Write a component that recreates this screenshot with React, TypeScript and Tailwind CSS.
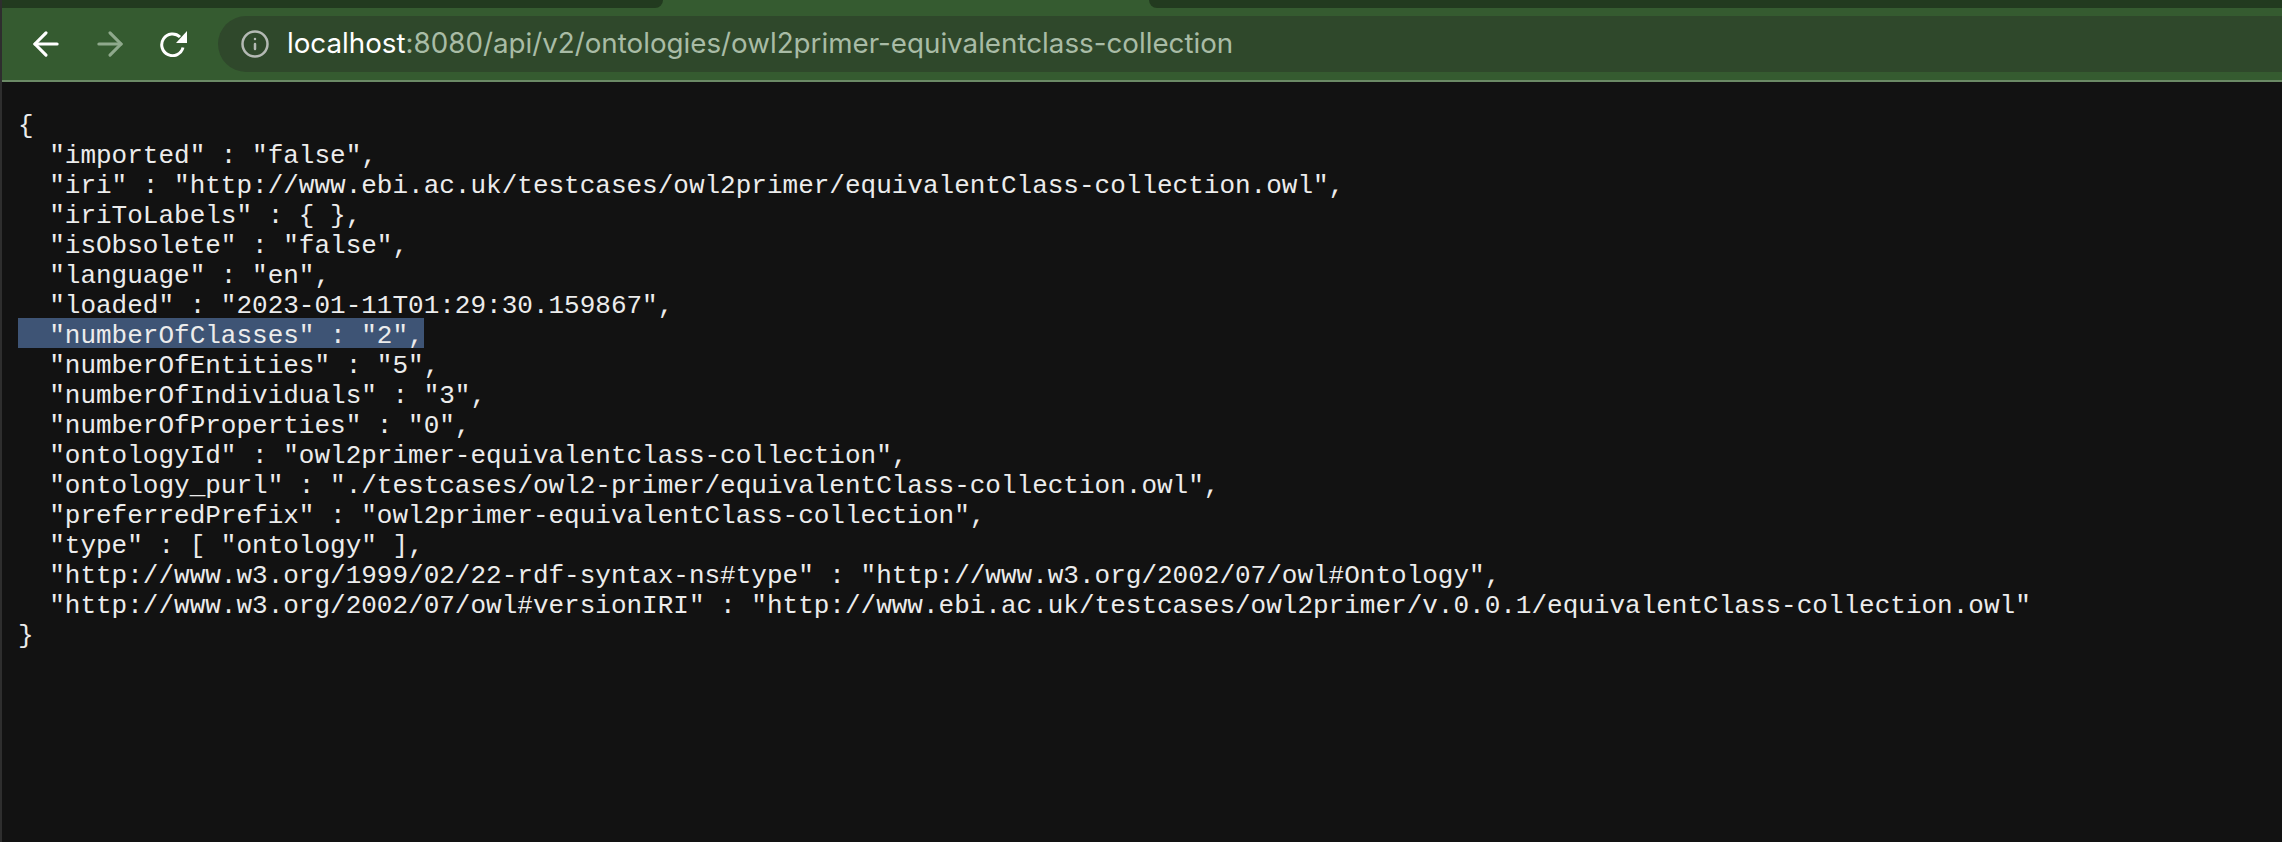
import { ArrowLeft, ArrowRight, Info } from 'lucide-react'

const JSON_TEXT = `{
  "imported" : "false",
  "iri" : "http://www.ebi.ac.uk/testcases/owl2primer/equivalentClass-collection.owl",
  "iriToLabels" : { },
  "isObsolete" : "false",
  "language" : "en",
  "loaded" : "2023-01-11T01:29:30.159867",`

const SELECTED = `  "numberOfClasses" : "2",`

const JSON_REST = `  "numberOfEntities" : "5",
  "numberOfIndividuals" : "3",
  "numberOfProperties" : "0",
  "ontologyId" : "owl2primer-equivalentclass-collection",
  "ontology_purl" : "./testcases/owl2-primer/equivalentClass-collection.owl",
  "preferredPrefix" : "owl2primer-equivalentClass-collection",
  "type" : [ "ontology" ],
  "http://www.w3.org/1999/02/22-rdf-syntax-ns#type" : "http://www.w3.org/2002/07/owl#Ontology",
  "http://www.w3.org/2002/07/owl#versionIRI" : "http://www.ebi.ac.uk/testcases/owl2primer/v.0.0.1/equivalentClass-collection.owl"
}`

function ReloadIcon() {
  return (
    <svg width="28" height="26" viewBox="0 0 28 26" className="text-white">
      <path d="M20 6A10.8 10.8 0 1 0 23 16.5" fill="none" stroke="currentColor" strokeWidth="3" />
      <path d="M27 0V12H16Z" fill="currentColor" />
    </svg>
  )
}

export default function App() {
  return (
    <div className="h-[842px] w-[2282px] overflow-hidden bg-[#121212] border-l-2 border-[#2e2e2e]">
      {/* tab strip + toolbar */}
      <div className="h-[82px] bg-[#355b30] border-b-2 border-[#6b8a66]">
        <div className="flex h-[8px] justify-between">
          <div className="h-full w-[661px] rounded-br-[12px] bg-[#223a1f]" />
          <div className="h-full w-[1133px] rounded-bl-[12px] bg-[#223a1f]" />
        </div>
        <div className="flex h-[56px] mt-[8px] items-center">
          <div className="flex w-[216px] items-center pl-[25px]">
            <ArrowLeft size={38} strokeWidth={2} className="text-white" />
            <ArrowRight size={38} strokeWidth={2} className="ml-[26px] text-[#8fa98c]" />
            <div className="ml-[31px]">
              <ReloadIcon />
            </div>
          </div>
          <div className="flex h-[56px] flex-1 items-center rounded-l-[28px] bg-[#2f482b] pl-[22px]">
            <Info size={30} strokeWidth={2} className="text-[#b4b9b4]" />
            <div className="ml-[17px] font-['Inter',sans-serif] text-[27.75px] text-[#a9bca6]">
              <span className="text-white">localhost</span>:8080/api/v2/ontologies/owl2primer-equivalentclass-collection
            </div>
          </div>
        </div>
      </div>
      {/* raw json body */}
      <div className="mt-[29px] pl-[16px] font-['Liberation_Mono',monospace] text-[26px] leading-[30px] text-[#ececec]">
        <pre className="font-['Liberation_Mono',monospace]">{JSON_TEXT}</pre>
        {/* selected row: highlight sits 3px above the text's line box */}
        <pre className="-mt-[3px] mb-[3px] h-[30px] w-fit bg-[#3e5475] pt-[3px] font-['Liberation_Mono',monospace]">{SELECTED}</pre>
        <pre className="font-['Liberation_Mono',monospace]">{JSON_REST}</pre>
      </div>
    </div>
  )
}
